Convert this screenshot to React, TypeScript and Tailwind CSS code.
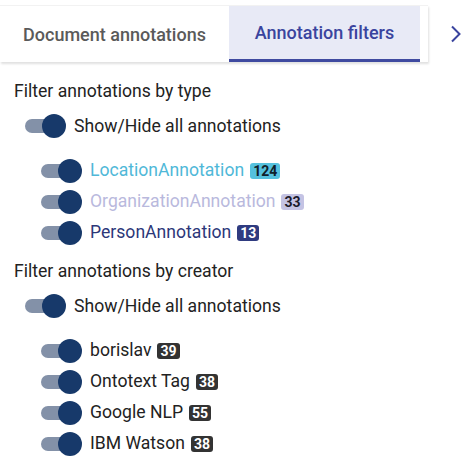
import React from "react";

interface FilterItem {
  label: string;
  count: number;
  text: string;
  badge: string;
}

const typeItems: FilterItem[] = [
  { label: "LocationAnnotation", count: 124, text: "text-[#4fb8d8]", badge: "bg-[#55c1de] text-[#10202a]" },
  { label: "OrganizationAnnotation", count: 33, text: "text-[#b9b9dd]", badge: "bg-[#c4c3e4] text-[#1b1b2b]" },
  { label: "PersonAnnotation", count: 13, text: "text-[#2c3779]", badge: "bg-[#2f3b80] text-white" },
];

const creatorItems: FilterItem[] = [
  { label: "borislav", count: 39, text: "text-[#222]", badge: "bg-[#333] text-white" },
  { label: "Ontotext Tag", count: 38, text: "text-[#222]", badge: "bg-[#333] text-white" },
  { label: "Google NLP", count: 55, text: "text-[#222]", badge: "bg-[#333] text-white" },
  { label: "IBM Watson", count: 38, text: "text-[#222]", badge: "bg-[#333] text-white" },
];

function Toggle() {
  return (
    <div className="relative w-[41px] h-[24px] shrink-0">
      <div className="absolute left-0 top-[5px] w-[36px] h-[14px] rounded-full bg-[#8391a8]" />
      <div className="absolute right-0 top-0 w-[24px] h-[24px] rounded-full bg-[#17396a]" />
    </div>
  );
}

function FilterGroup({ title, items }: { title: string; items: FilterItem[] }) {
  return (
    <div>
      <div className="h-[26px] flex items-center text-[17.6px] text-[#222]">{title}</div>
      <div className="mt-[7px] h-[30px] flex items-center gap-[8px] pl-[11px] text-[17.6px] text-[#222]">
        <Toggle />
        <span>Show/Hide all annotations</span>
      </div>
      <div className="mt-[14px] pl-[27px]">
        {items.map((item) => (
          <div key={item.label} className="h-[31px] flex items-center gap-[8px]">
            <Toggle />
            <span className={`text-[17.6px] ${item.text}`}>{item.label}</span>
            <span className={`-ml-[2px] mt-[1px] h-[16px] px-[3px] rounded-[3px] text-[14px] font-bold leading-[16px] ${item.badge}`}>
              {item.count}
            </span>
          </div>
        ))}
      </div>
    </div>
  );
}

export default function App() {
  return (
    <div className="w-[474px] h-[475px] bg-white overflow-hidden" style={{ fontFamily: "Roboto, 'Noto Sans', sans-serif" }}>
      <div className="pt-[5px] flex">
        <div className="flex w-[428px] h-[57px] border-t border-[#f2f2f2] shadow-[1px_2px_2px_rgba(0,0,0,0.12)]">
          <div className="w-[229px] flex items-center justify-center text-[18px] font-medium text-[#5a5a5a]">
            Document annotations
          </div>
          <div className="w-[191px] flex items-center justify-center bg-[#e8eaf6] border-b-[3px] border-[#3f4aa0] text-[18px] font-medium text-[#3a449e]">
            Annotation filters
          </div>
        </div>
        <div className="flex-1 flex items-center pl-[22px]">
          <svg width="12" height="18" viewBox="0 0 12 18" fill="none" stroke="#3a449e" strokeWidth="2">
            <path d="M2 1.5l7.5 7.5-7.5 7.5" />
          </svg>
        </div>
      </div>
      <div className="pl-[14px] pt-[16px]">
        <FilterGroup title="Filter annotations by type" items={typeItems} />
        <div className="mt-[10px]">
          <FilterGroup title="Filter annotations by creator" items={creatorItems} />
        </div>
      </div>
    </div>
  );
}
